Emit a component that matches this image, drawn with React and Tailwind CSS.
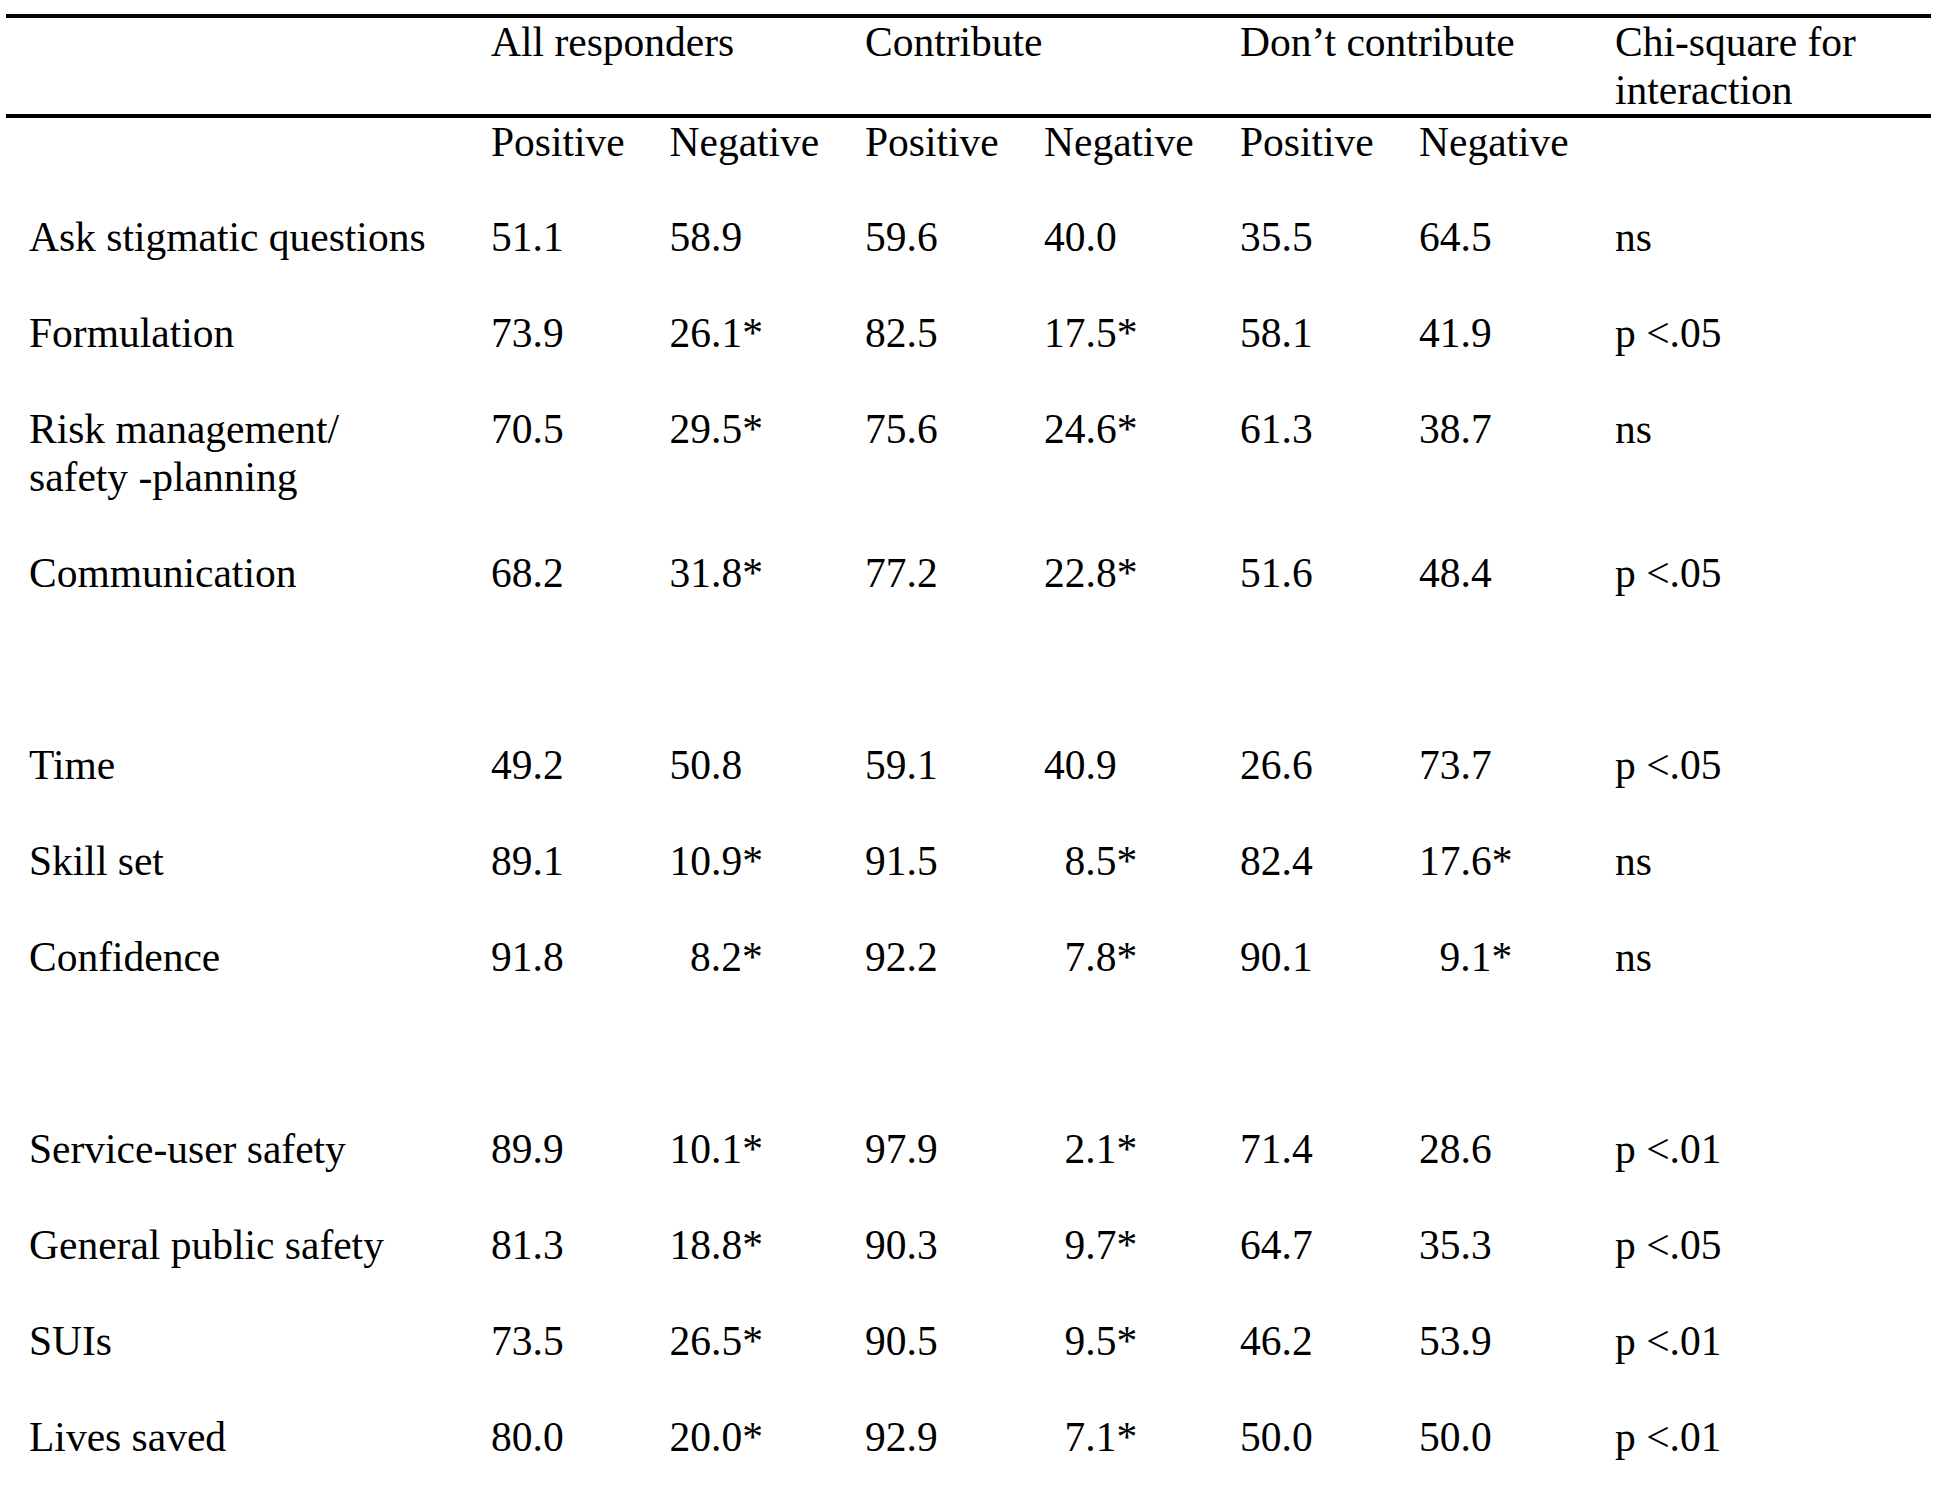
import React from "react";

const rows = [
    ["Ask stigmatic questions", "51.1", "58.9", "59.6", "40.0", "35.5", "64.5", "ns"],
    ["Formulation", "73.9", "26.1*", "82.5", "17.5*", "58.1", "41.9", "p <.05"],
    [["Risk management/", "safety -planning"], "70.5", "29.5*", "75.6", "24.6*", "61.3", "38.7", "ns"],
    ["Communication", "68.2", "31.8*", "77.2", "22.8*", "51.6", "48.4", "p <.05"],
    null,
    ["Time", "49.2", "50.8", "59.1", "40.9", "26.6", "73.7", "p <.05"],
    ["Skill set", "89.1", "10.9*", "91.5", "8.5*", "82.4", "17.6*", "ns"],
    ["Confidence", "91.8", "8.2*", "92.2", "7.8*", "90.1", "9.1*", "ns"],
    null,
    ["Service-user safety", "89.9", "10.1*", "97.9", "2.1*", "71.4", "28.6", "p <.01"],
    ["General public safety", "81.3", "18.8*", "90.3", "9.7*", "64.7", "35.3", "p <.05"],
    ["SUIs", "73.5", "26.5*", "90.5", "9.5*", "46.2", "53.9", "p <.01"],
    ["Lives saved", "80.0", "20.0*", "92.9", "7.1*", "50.0", "50.0", "p <.01"],
];

const gridCols =
    "grid grid-cols-[485px_178.5px_195.5px_179px_196px_179px_196px_1fr]";

const Rule = () => <div className="h-[4px] bg-black" />;

const Cell = ({ value }) => {
    // single-digit values are padded by one figure so the decimals line up
    const pad = /^\d\./.test(value);
    return <div className={pad ? "pl-[20.5px]" : ""}>{value}</div>;
};

export default function App() {
    return (
        <div
            className="bg-white text-black min-h-screen pt-[14px] pl-[6px] text-[41.5px] leading-[48px]"
            style={{ fontFamily: '"Liberation Serif", "Times New Roman", serif' }}
        >
            <div className="w-[1925px]">
                <Rule />
                <div className={gridCols}>
                    <div />
                    <div className="col-span-2">All responders</div>
                    <div className="col-span-2">Contribute</div>
                    <div className="col-span-2">Don’t contribute</div>
                    <div>
                        Chi-square for
                        <br />
                        interaction
                    </div>
                </div>
                <Rule />
                <div className={`${gridCols} pb-[47px]`}>
                    <div />
                    <div>Positive</div>
                    <div>Negative</div>
                    <div>Positive</div>
                    <div>Negative</div>
                    <div>Positive</div>
                    <div>Negative</div>
                    <div />
                </div>

                {rows.map((row, i) =>
                    row === null ? (
                        <div key={i} className="h-[96px]" />
                    ) : (
                        <div key={i} className={`${gridCols} pb-[48px]`}>
                            <div className="pl-[23px]">
                                {Array.isArray(row[0]) ? (
                                    <>
                                        {row[0][0]}
                                        <br />
                                        {row[0][1]}
                                    </>
                                ) : (
                                    row[0]
                                )}
                            </div>
                            {row.slice(1).map((v, j) => (
                                <Cell key={j} value={v} />
                            ))}
                        </div>
                    )
                )}
            </div>
        </div>
    );
}
